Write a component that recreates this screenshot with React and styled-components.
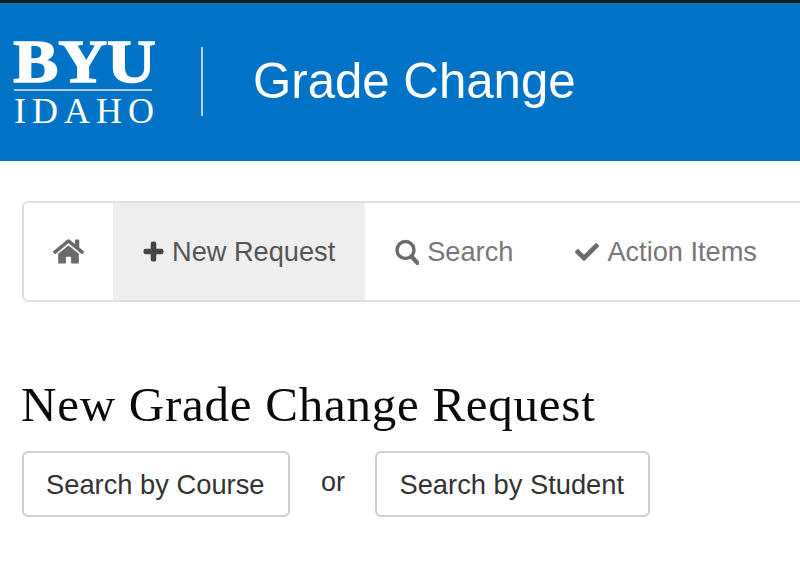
import React from "react";
import styled, { createGlobalStyle } from "styled-components";
import { FaHome, FaPlus, FaCheck } from "react-icons/fa";

const GlobalStyle = createGlobalStyle`
  html, body {
    margin: 0;
    padding: 0;
    background: #fff;
    overflow: hidden;
    font-family: "Liberation Sans", Arial, sans-serif;
  }
`;

const Page = styled.div`
  width: 800px;
  height: 562px;
  overflow: hidden;
`;

const Header = styled.header`
  height: 158px;
  border-top: 3px solid #1c1c1c;
  background: #0073c6;
  display: flex;
  align-items: center;
  color: #fff;
`;

const Logo = styled.div`
  width: 141px;
  margin-left: 14px;
  display: flex;
  flex-direction: column;
  align-items: stretch;
  font-family: "Liberation Serif", serif;
`;

const LogoTop = styled.div`
  font-size: 62px;
  font-weight: 700;
  height: 42px;
  line-height: 42px;
  text-align: center;
  white-space: nowrap;
  transform: scaleX(1.09);
  -webkit-text-stroke: 1.5px #fff;
`;

const LogoRule = styled.div`
  height: 2px;
  margin: 7px 3px 0 0;
  background: #a9cdea;
`;

const LogoBottom = styled.div`
  font-size: 36px;
  height: 34px;
  line-height: 41px;
  letter-spacing: 6px;
  text-align: center;
  white-space: nowrap;
`;

const Divider = styled.div`
  width: 2px;
  height: 69px;
  margin: 0 50px 2px 46px;
  background: #b8d7f0;
`;

const AppTitle = styled.div`
  font-size: 49.2px;
  margin-bottom: 3px;
`;

const Main = styled.main`
  padding: 40px 0 0 22px;
`;

const NavBar = styled.nav`
  width: 800px;
  height: 97px;
  display: flex;
  border: 2px solid #dfdfdf;
  border-radius: 6px;
  overflow: hidden;
`;

const NavItem = styled.a`
  display: flex;
  align-items: center;
  gap: 8px;
  padding: 0 ${(p) => p.$pad || 30}px;
  margin-left: ${(p) => p.$shift || 0}px;
  font-size: 27.2px;
  background: ${(p) => (p.$active ? "#eeeeee" : "transparent")};
  color: ${(p) => (p.$active ? "#555" : "#777")};
  white-space: nowrap;
  svg {
    color: ${(p) => (p.$active ? "#444" : "#6b6b6b")};
  }
`;

const Heading = styled.h1`
  margin: 76px 0 0 -1px;
  font-family: "Liberation Serif", serif;
  font-weight: 400;
  font-size: 49px;
  letter-spacing: 0.75px;
  line-height: 54px;
  color: #0a0a0a;
`;

const ButtonRow = styled.div`
  margin-top: 19px;
  display: flex;
  align-items: center;
`;

const Button = styled.button`
  height: 66px;
  padding: 1px 24px 0 22px;
  border: 2px solid #cfcfcf;
  border-radius: 6px;
  background: #fff;
  color: #333;
  font-family: inherit;
  font-size: 27.3px;
`;

const Or = styled.span`
  width: 85px;
  text-align: center;
  font-size: 27px;
  color: #333;
  position: relative;
  top: -2px;
`;

const SearchIcon = () => (
  <svg width="24" height="26" viewBox="0 0 24 26" fill="none" stroke="currentColor">
    <circle cx="10.5" cy="11" r="8.5" strokeWidth="3.4" />
    <path d="M16.5 17.5 L22.5 24" strokeWidth="4.2" strokeLinecap="round" />
  </svg>
);

export default function App() {
  return (
    <Page>
      <GlobalStyle />
      <Header>
        <Logo>
          <LogoTop>BYU</LogoTop>
          <LogoRule />
          <LogoBottom>IDAHO</LogoBottom>
        </Logo>
        <Divider />
        <AppTitle>Grade Change</AppTitle>
      </Header>
      <Main>
        <NavBar>
          <NavItem $pad={29}>
            <FaHome size={31} />
          </NavItem>
          <NavItem $active>
            <FaPlus size={21} stroke="currentColor" strokeWidth={40} />
            New Request
          </NavItem>
          <NavItem>
            <SearchIcon />
            Search
          </NavItem>
          <NavItem $shift={2}>
            <FaCheck size={24} />
            Action Items
          </NavItem>
        </NavBar>
        <Heading>New Grade Change Request</Heading>
        <ButtonRow>
          <Button>Search by Course</Button>
          <Or>or</Or>
          <Button>Search by Student</Button>
        </ButtonRow>
      </Main>
    </Page>
  );
}
